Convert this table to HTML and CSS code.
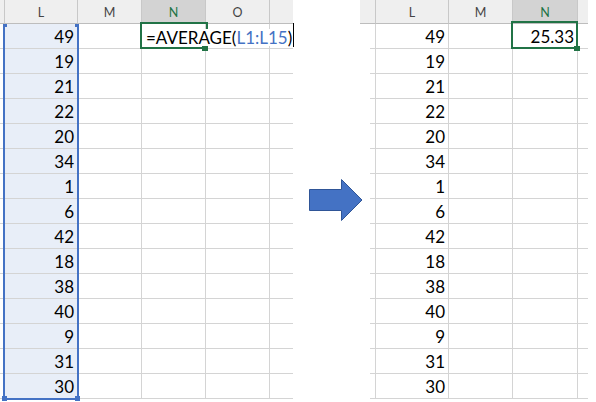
FILE: index.html
```html
<!DOCTYPE html>
<html>
<head>
<meta charset="utf-8">
<link rel="stylesheet" href="styles.css">
</head>
<body>
<div class="sheet left">
  <div class="c h"></div><div class="c h">L</div><div class="c h">M</div><div class="c h hs">N</div><div class="c h">O</div><div class="c h last"></div>
  <div class="c"></div><div class="c sel">49</div><div class="c"></div><div class="c"></div><div class="c"></div><div class="c last"></div>
  <div class="c"></div><div class="c sel">19</div><div class="c"></div><div class="c"></div><div class="c"></div><div class="c last"></div>
  <div class="c"></div><div class="c sel">21</div><div class="c"></div><div class="c"></div><div class="c"></div><div class="c last"></div>
  <div class="c"></div><div class="c sel">22</div><div class="c"></div><div class="c"></div><div class="c"></div><div class="c last"></div>
  <div class="c"></div><div class="c sel">20</div><div class="c"></div><div class="c"></div><div class="c"></div><div class="c last"></div>
  <div class="c"></div><div class="c sel">34</div><div class="c"></div><div class="c"></div><div class="c"></div><div class="c last"></div>
  <div class="c"></div><div class="c sel">1</div><div class="c"></div><div class="c"></div><div class="c"></div><div class="c last"></div>
  <div class="c"></div><div class="c sel">6</div><div class="c"></div><div class="c"></div><div class="c"></div><div class="c last"></div>
  <div class="c"></div><div class="c sel">42</div><div class="c"></div><div class="c"></div><div class="c"></div><div class="c last"></div>
  <div class="c"></div><div class="c sel">18</div><div class="c"></div><div class="c"></div><div class="c"></div><div class="c last"></div>
  <div class="c"></div><div class="c sel">38</div><div class="c"></div><div class="c"></div><div class="c"></div><div class="c last"></div>
  <div class="c"></div><div class="c sel">40</div><div class="c"></div><div class="c"></div><div class="c"></div><div class="c last"></div>
  <div class="c"></div><div class="c sel">9</div><div class="c"></div><div class="c"></div><div class="c"></div><div class="c last"></div>
  <div class="c"></div><div class="c sel">31</div><div class="c"></div><div class="c"></div><div class="c"></div><div class="c last"></div>
  <div class="c"></div><div class="c sel">30</div><div class="c"></div><div class="c"></div><div class="c"></div><div class="c last"></div>

  <div class="range-box"></div>
  <div class="rh rh-tl"></div><div class="rh rh-tr"></div><div class="rh rh-bl"></div><div class="rh rh-br"></div>
  <div class="active active-left"></div>
  <div class="editor">=AVERAGE(<span class="ref">L1:L15</span>)</div>
  <div class="fill fill-left"></div>
</div>

<div class="mid">
  <svg class="arrow" width="56" height="44" viewBox="0 0 56 44">
    <path d="M0.5 10.5 H32.5 V0.5 L53 21 L32.5 41.5 V31.5 H0.5 Z" fill="#4472c4" stroke="#2f5597" stroke-width="1"/>
  </svg>
</div>

<div class="sheet right">
  <div class="c h"></div><div class="c h">L</div><div class="c h">M</div><div class="c h hs">N</div><div class="c h last"></div>
  <div class="c stub"></div><div class="c">49</div><div class="c"></div><div class="c">25.33</div><div class="c last"></div>
  <div class="c stub"></div><div class="c">19</div><div class="c"></div><div class="c"></div><div class="c last"></div>
  <div class="c stub"></div><div class="c">21</div><div class="c"></div><div class="c"></div><div class="c last"></div>
  <div class="c stub"></div><div class="c">22</div><div class="c"></div><div class="c"></div><div class="c last"></div>
  <div class="c stub"></div><div class="c">20</div><div class="c"></div><div class="c"></div><div class="c last"></div>
  <div class="c stub"></div><div class="c">34</div><div class="c"></div><div class="c"></div><div class="c last"></div>
  <div class="c stub"></div><div class="c">1</div><div class="c"></div><div class="c"></div><div class="c last"></div>
  <div class="c stub"></div><div class="c">6</div><div class="c"></div><div class="c"></div><div class="c last"></div>
  <div class="c stub"></div><div class="c">42</div><div class="c"></div><div class="c"></div><div class="c last"></div>
  <div class="c stub"></div><div class="c">18</div><div class="c"></div><div class="c"></div><div class="c last"></div>
  <div class="c stub"></div><div class="c">38</div><div class="c"></div><div class="c"></div><div class="c last"></div>
  <div class="c stub"></div><div class="c">40</div><div class="c"></div><div class="c"></div><div class="c last"></div>
  <div class="c stub"></div><div class="c">9</div><div class="c"></div><div class="c"></div><div class="c last"></div>
  <div class="c stub"></div><div class="c">31</div><div class="c"></div><div class="c"></div><div class="c last"></div>
  <div class="c stub"></div><div class="c">30</div><div class="c"></div><div class="c"></div><div class="c last"></div>

  <div class="active active-right"></div>
  <div class="fill fill-right"></div>
</div>
</body>
</html>
```

FILE: styles.css
```css
html, body {
  margin: 0;
  padding: 0;
  background: #ffffff;
}

body {
  display: flex;
  align-items: flex-start;
  width: 596px;
  height: 402px;
  overflow: hidden;
  font-family: Lato, "Open Sans", sans-serif;
}

.sheet {
  position: relative;
  display: grid;
  grid-template-rows: 24px repeat(15, 25px);
}

.left {
  width: 293px;
  grid-template-columns: 5px 73px 64px 64px 64px 23px;
}

.right {
  width: 228px;
  grid-template-columns: 16px 73px 64px 65px 10px;
}

.c {
  box-sizing: border-box;
  border-right: 1px solid #d4d4d4;
  border-bottom: 1px solid #d4d4d4;
  font-size: 17px;
  line-height: 25px;
  text-align: right;
  padding-right: 3px;
  color: #000000;
  white-space: nowrap;
}

.c.last {
  border-right: none;
}

.c.h {
  background: #efefef;
  border-right-color: #c8c8c8;
  border-bottom-color: #bdbdbd;
  font-size: 12.5px;
  line-height: 22px;
  padding: 2px 0 0 0;
  text-align: center;
  color: #444444;
}

.c.h.hs {
  background: #d3d3d3;
  color: #217346;
}

.c.sel {
  background: #e8eef8;
}

.c.stub {
  margin-left: 10px;
}

.mid {
  width: 67px;
  height: 402px;
  padding-top: 179px;
  box-sizing: border-box;
}

.arrow {
  display: block;
  margin-left: 16px;
  overflow: visible;
}

.range-box {
  position: absolute;
  left: 3px;
  top: 24px;
  width: 76px;
  height: 376px;
  box-sizing: border-box;
  border: 2px solid #4472c4;
  border-top: none;
}

.rh {
  position: absolute;
  background: #4472c4;
}

.rh-tl { left: 3px; top: 24px; width: 4px; height: 3px; }
.rh-tr { left: 75px; top: 24px; width: 4px; height: 3px; }
.rh-bl { left: 2px; top: 396px; width: 5px; height: 5px; }
.rh-br { left: 75px; top: 396px; width: 5px; height: 5px; }

.active {
  position: absolute;
  box-sizing: border-box;
  border: 2px solid #217346;
}

.active-left {
  left: 140px;
  top: 22px;
  width: 68px;
  height: 27px;
}

.active-right {
  left: 151px;
  top: 21px;
  width: 67px;
  height: 28px;
}

.fill {
  position: absolute;
  background: #217346;
  width: 6px;
  height: 5px;
}

.fill-left { left: 202px; top: 46px; }
.fill-right { left: 214px; top: 46px; }

.editor {
  position: absolute;
  left: 142px;
  top: 29px;
  height: 17px;
  padding: 0 2px 0 4px;
  background: #ffffff;
  font-size: 17px;
  line-height: 17px;
  color: #000000;
  white-space: nowrap;
}

.editor::after {
  content: "";
  position: absolute;
  right: 0;
  top: -6px;
  width: 1px;
  height: 24px;
  background: #000000;
}

.editor .ref {
  color: #4472c4;
}
```
